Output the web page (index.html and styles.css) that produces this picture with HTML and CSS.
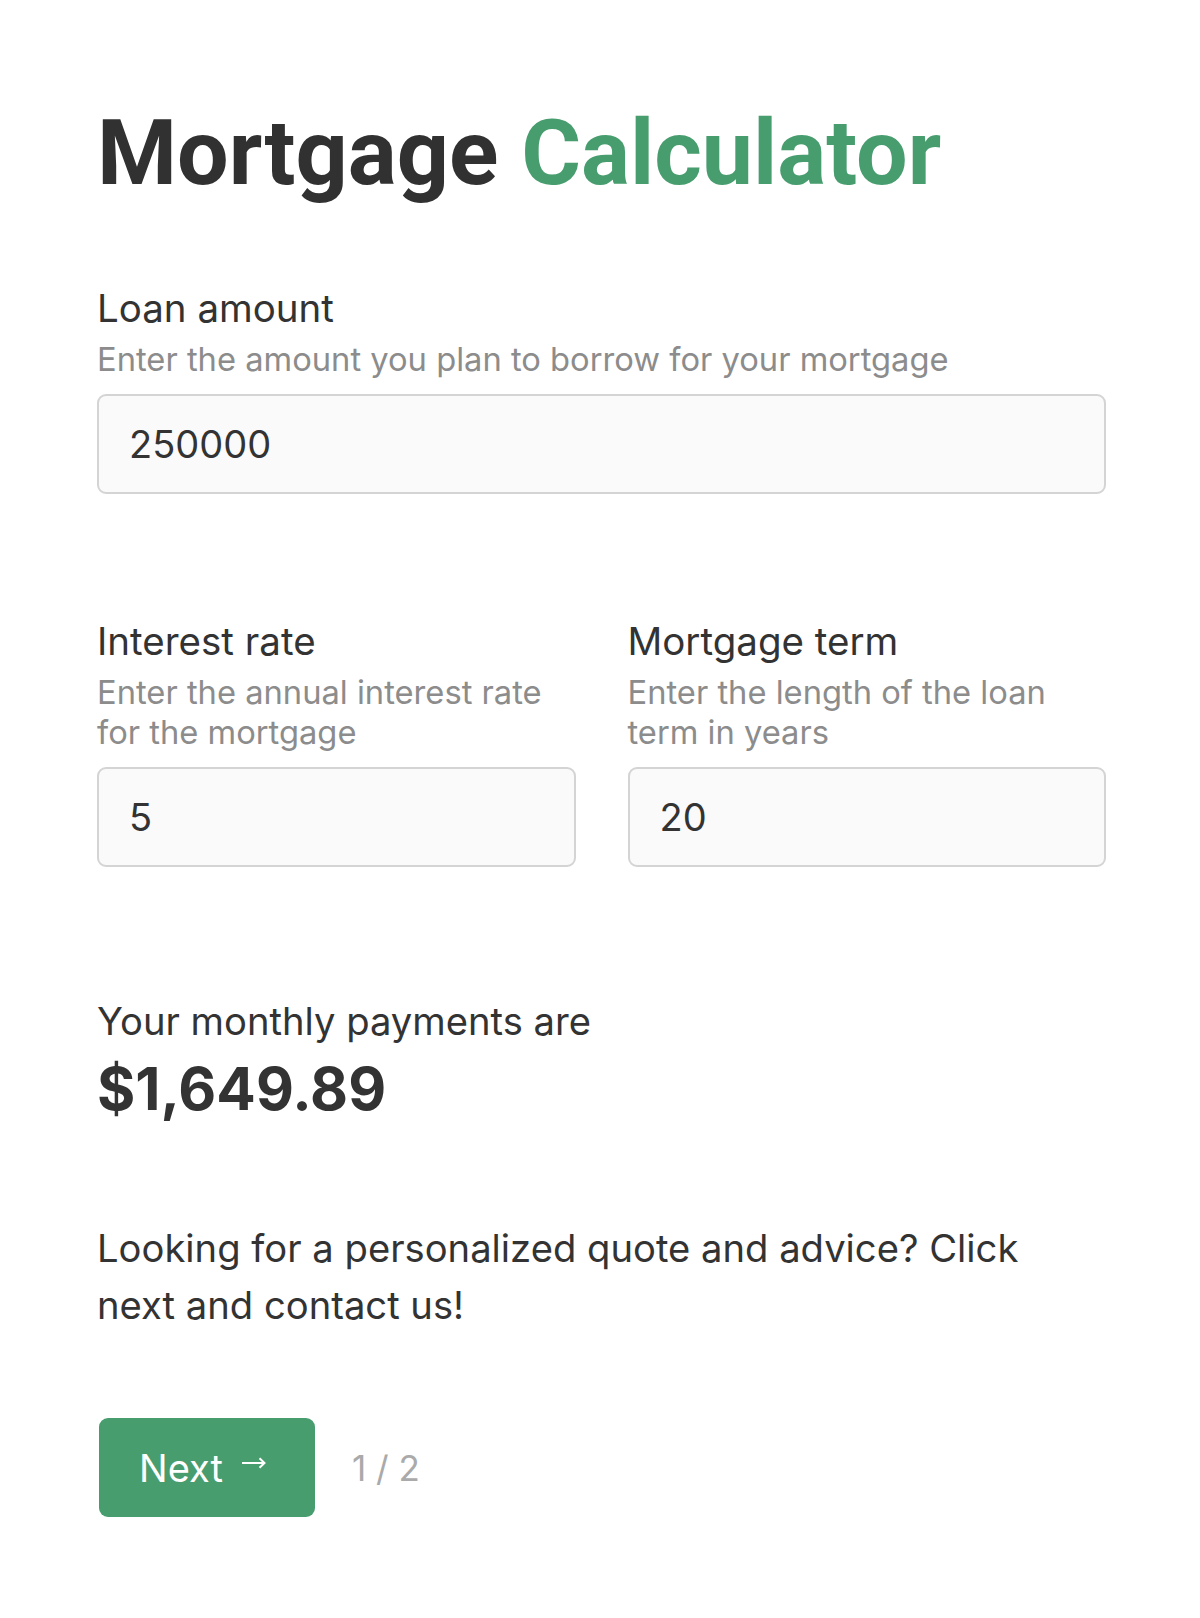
FILE: index.html
```html
<!DOCTYPE html>
<html lang="en">
<head>
<meta charset="utf-8">
<title>Mortgage Calculator</title>
<link rel="stylesheet" href="styles.css">
</head>
<body>
<main class="form">
  <h1 class="title">Mortgage <span class="accent">Calculator</span></h1>

  <div class="field">
    <label class="label" for="amount">Loan amount</label>
    <p class="desc">Enter the amount you plan to borrow for your mortgage</p>
    <input class="input" id="amount" type="text" value="250000">
  </div>

  <div class="row">
    <div class="field">
      <label class="label" for="rate">Interest rate</label>
      <p class="desc">Enter the annual interest rate for the mortgage</p>
      <input class="input" id="rate" type="text" value="5">
    </div>
    <div class="field">
      <label class="label" for="term">Mortgage term</label>
      <p class="desc">Enter the length of the loan term in years</p>
      <input class="input" id="term" type="text" value="20">
    </div>
  </div>

  <div class="result">
    <p class="result-label">Your monthly payments are</p>
    <p class="result-value">$1,649.89</p>
  </div>

  <p class="cta">Looking for a personalized quote and advice? Click next and contact us!</p>

  <div class="actions">
    <button class="btn" type="button">Next<svg class="arrow" width="24" height="12" viewBox="0 0 24 12" aria-hidden="true"><path d="M0 6H22.5M17.5 1.2L22.5 6L17.5 10.8" fill="none" stroke="#ffffff" stroke-width="2"/></svg></button>
    <span class="step">1 / 2</span>
  </div>
</main>
</body>
</html>
```

FILE: styles.css
```css
* { box-sizing: border-box; }

html, body {
  margin: 0;
  padding: 0;
  background: #ffffff;
}

body {
  font-family: Inter, "Noto Sans", "Liberation Sans", sans-serif;
  color: #333333;
}

.form {
  width: 1106px;
  padding: 98px 0 0 97px;
}

.title {
  margin: 0 0 76px;
  font-family: Roboto, "Liberation Sans", sans-serif;
  font-weight: 700;
  font-size: 91.5px;
  line-height: 110px;
  color: #313131;
}

.accent { color: #479d6e; }

.field {
  display: flex;
  flex-direction: column;
}

.label {
  font-size: 38.5px;
  line-height: 48px;
  color: #333333;
}

.desc {
  margin: 7px 0 15px;
  font-size: 32.7px;
  line-height: 40px;
  color: #8c8c8c;
}

.input {
  width: 100%;
  height: 100px;
  padding: 0 30px;
  border: 2px solid #d4d4d4;
  border-radius: 9px;
  background: #fafafa;
  font-family: Inter, "Noto Sans", sans-serif;
  font-size: 38px;
  color: #333333;
  outline: none;
}

.row {
  margin-top: 123px;
  display: grid;
  grid-template-columns: 1fr 1fr;
  column-gap: 52px;
}

.result {
  margin-top: 130px;
}

.result-label {
  margin: 0;
  font-size: 38.2px;
  line-height: 48px;
}

.result-value {
  margin: 8px 0 0;
  font-size: 58.5px;
  font-weight: 700;
  line-height: 72px;
}

.cta {
  margin: 95px 0 0;
  max-width: 960px;
  font-size: 38.2px;
  line-height: 57px;
}

.actions {
  margin-top: 84px;
  display: flex;
  align-items: center;
  gap: 37px;
  padding-left: 2px;
}

.btn {
  display: flex;
  align-items: center;
  justify-content: flex-start;
  width: 216px;
  height: 99px;
  border: none;
  border-radius: 9px;
  background: #479d6e;
  color: #ffffff;
  font-family: Inter, "Noto Sans", sans-serif;
  font-size: 38px;
  padding: 0 0 0 40px;
}

.arrow {
  margin: 0 0 10px 19px;
}

.step {
  font-size: 35px;
  color: #aaaaaa;
}
```
